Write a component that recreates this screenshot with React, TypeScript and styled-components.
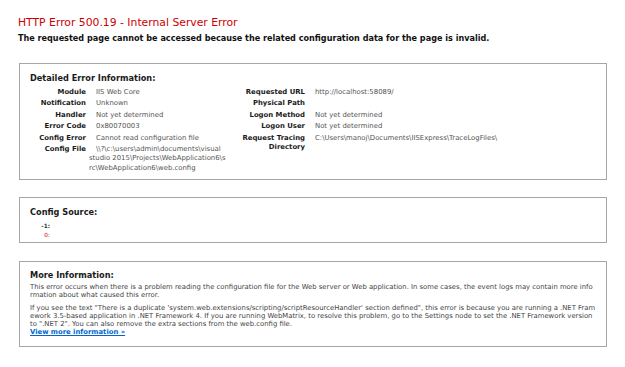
import styled, { createGlobalStyle } from "styled-components";

const GlobalStyle = createGlobalStyle`
  html, body {
    margin: 0;
    padding: 0;
    background: #fff;
  }
  body {
    font-family: "DejaVu Sans", Verdana, sans-serif;
    color: #000;
  }
`;

interface InfoRow {
  label: string;
  value: string;
}

const leftRows: InfoRow[] = [
  { label: "Module", value: "IIS Web Core" },
  { label: "Notification", value: "Unknown" },
  { label: "Handler", value: "Not yet determined" },
  { label: "Error Code", value: "0x80070003" },
  { label: "Config Error", value: "Cannot read configuration file" },
  {
    label: "Config File",
    value:
      "\\\\?\\c:\\users\\admin\\documents\\visual\nstudio 2015\\Projects\\WebApplication6\\s\nrc\\WebApplication6\\web.config",
  },
];

const rightRows: InfoRow[] = [
  { label: "Requested URL", value: "http://localhost:58089/" },
  { label: "Physical Path", value: "" },
  { label: "Logon Method", value: "Not yet determined" },
  { label: "Logon User", value: "Not yet determined" },
  {
    label: "Request Tracing\nDirectory",
    value: "C:\\Users\\manoj\\Documents\\IISExpress\\TraceLogFiles\\",
  },
];

function App() {
  return (
    <>
      <GlobalStyle />
      <Page>
        <Title>HTTP Error 500.19 - Internal Server Error</Title>
        <Subtitle>
          The requested page cannot be accessed because the related configuration data for the page is invalid.
        </Subtitle>

        <Content>
          <Box $pad="9px 10px 5px">
            <BoxTitle>Detailed Error Information:</BoxTitle>
            <InfoColumns>
              <InfoGrid $labelWidth={56} $valueWidth="146px">
                {leftRows.map((row) => (
                  <Row key={row.label}>
                    <Label>{row.label}</Label>
                    <Value>{row.value}</Value>
                  </Row>
                ))}
              </InfoGrid>
              <InfoGrid $labelWidth={73} $valueWidth="1fr">
                {rightRows.map((row) => (
                  <Row key={row.label}>
                    <Label>{row.label}</Label>
                    <Value>{row.value}</Value>
                  </Row>
                ))}
              </InfoGrid>
            </InfoColumns>
          </Box>

          <Box $pad="9px 10px 2px" $gap={17}>
            <BoxTitle>Config Source:</BoxTitle>
            <CodeBlock>
              <LineNo>-1:</LineNo>
              <LineText />
              <LineNo $error>0:</LineNo>
              <LineText />
            </CodeBlock>
          </Box>

          <Box $pad="7.5px 10px 10px" $gap={18}>
            <BoxTitle>More Information:</BoxTitle>
            <Para>
              <Line>
                This error occurs when there is a problem reading the configuration file for the Web server or Web application. In some cases, the event logs may contain more info
              </Line>
              <Line>rmation about what caused this error.</Line>
            </Para>
            <Para>
              <Line>
                If you see the text "There is a duplicate 'system.web.extensions/scripting/scriptResourceHandler' section defined", this error is because you are running a .NET Fram
              </Line>
              <Line>
                ework 3.5-based application in .NET Framework 4. If you are running WebMatrix, to resolve this problem, go to the Settings node to set the .NET Framework version
              </Line>
              <Line>to ".NET 2". You can also remove the extra sections from the web.config file.</Line>
              <Line>
                <MoreLink href="#">View more information »</MoreLink>
              </Line>
            </Para>
          </Box>
        </Content>
      </Page>
    </>
  );
}

const Page = styled.div`
  padding: 16px 0 0 18px;
  width: 625px;
  box-sizing: border-box;
`;

const Title = styled.h1`
  margin: 0;
  font-size: 10.8px;
  line-height: 13px;
  font-weight: normal;
  color: #cc0000;
`;

const Subtitle = styled.h2`
  margin: 4px 0 0;
  font-size: 8.1px;
  line-height: 10px;
  font-weight: bold;
  color: #111;
`;

const Content = styled.div`
  margin-top: 20px;
  padding-left: 1px;
  width: 588px;
  display: flex;
  flex-direction: column;
`;

const Box = styled.section<{ $pad: string; $gap?: number }>`
  border: 1px solid #a6a6a6;
  padding: ${(p) => p.$pad};
  margin-top: ${(p) => p.$gap ?? 0}px;
  background: #fff;
`;

const BoxTitle = styled.h3`
  margin: 0;
  font-size: 8.2px;
  line-height: 10px;
  font-weight: bold;
  color: #1a1a1a;
`;

const InfoColumns = styled.div`
  display: flex;
  margin-top: 4px;
`;

const InfoGrid = styled.div<{ $labelWidth: number; $valueWidth: string }>`
  display: grid;
  grid-template-columns: ${(p) => p.$labelWidth}px ${(p) => p.$valueWidth};
  align-content: start;
  flex: ${(p) => (p.$valueWidth === "1fr" ? "1" : "none")};
`;

const Row = styled.div`
  display: contents;
`;

const Label = styled.div`
  text-align: right;
  font-size: 6.9px;
  line-height: 9.4px;
  padding: 1px 0;
  font-weight: bold;
  color: #1a1a1a;
  white-space: pre;
`;

const Value = styled.div`
  font-size: 6.9px;
  line-height: 9.4px;
  padding: 1px 0 1px 3px;
  text-indent: 7px;
  color: #555;
  white-space: pre;
`;

const CodeBlock = styled.div`
  display: grid;
  grid-template-columns: 10px 1fr;
  margin: 5px 0 0 10px;
  font-size: 5.8px;
  line-height: 9px;
`;

const LineNo = styled.span<{ $error?: boolean }>`
  text-align: right;
  font-weight: ${(p) => (p.$error ? "normal" : "bold")};
  color: ${(p) => (p.$error ? "#cc0000" : "#333")};
`;

const LineText = styled.span``;

const Para = styled.p`
  margin: 3px 0 0;
  font-size: 6.85px;
  line-height: 8.2px;
  color: #444;

  & + & {
    margin-top: 4.5px;
  }
`;

const Line = styled.span`
  display: block;
  white-space: nowrap;
`;

const MoreLink = styled.a`
  color: #0066cc;
  font-weight: bold;
  text-decoration: underline;
`;

export default App;
